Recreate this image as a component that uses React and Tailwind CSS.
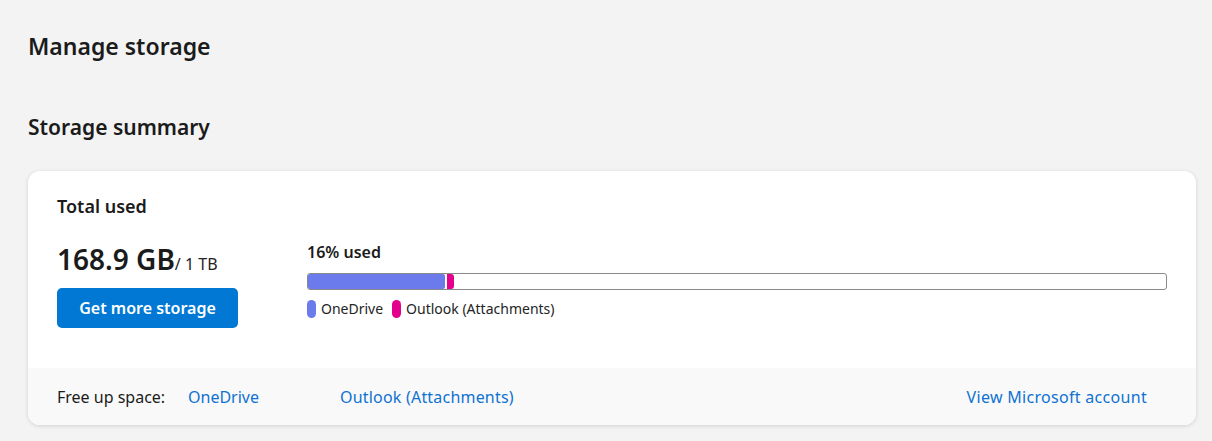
import React from 'react';

const font = { fontFamily: '"Segoe UI", "Noto Sans", "Open Sans", sans-serif' };

// Storage figures for the summary card
const usage = {
  used: '168.9 GB',
  total: '1 TB',
  percent: 16,
  segments: [
    { name: 'OneDrive', color: 'bg-[#6b7bec]', width: 16 },
    { name: 'Outlook (Attachments)', color: 'bg-[#e3008c]', width: 0.8 },
  ],
};

const UsageBar = ({ segments }) => (
  <div className="flex h-[17px] w-full overflow-hidden rounded-[3px] border border-[#8a8a8a] bg-white">
    {segments.map((s, i) => (
      <div
        key={s.name}
        className={`${s.color} h-full ${i === 0 ? 'rounded-r-[2px]' : 'ml-[2px] rounded-r-[3px]'}`}
        style={{ width: `${s.width}%` }}
      />
    ))}
  </div>
);

const Legend = ({ segments }) => (
  <div className="mt-[8px] flex items-center gap-[9px]">
    {segments.map((s) => (
      <div key={s.name} className="flex items-center gap-[5px]">
        <span className={`${s.color} h-[18px] w-[9px] rounded-full`} />
        <span className="text-[14px] text-[#242424]">{s.name}</span>
      </div>
    ))}
  </div>
);

export default function App() {
  return (
    <div className="min-h-[441px] bg-[#f3f3f3] pl-[28px] pr-[16px] pt-[29px] text-[#1b1b1b]" style={font}>
      <h1 className="text-[23px] font-[560] leading-[34px]">Manage storage</h1>
      <h2 className="mt-[49px] text-[21px] font-[560] leading-[30px]">Storage summary</h2>

      <div className="mt-[29px] overflow-hidden rounded-[12px] bg-white shadow-[0_1px_4px_rgba(0,0,0,0.14)]">
        <div className="px-[29px] pb-[40px] pt-[22px]">
          <div className="text-[18px] font-[560] leading-[26px]">Total used</div>
          <div className="mt-[22px] flex">
            <div className="w-[250px] shrink-0">
              <div className="flex items-baseline">
                <span className="text-[28px] font-[560] leading-[36px]">{usage.used}</span>
                <span className="text-[16px] text-[#242424]">/ {usage.total}</span>
              </div>
              <button className="mt-[11px] h-[40px] w-[181px] rounded-[5px] bg-[#0078d4] text-[16px] font-[560] text-white">
                Get more storage
              </button>
            </div>
            <div className="flex-1">
              <div className="text-[16px] font-[560] leading-[22px]">{usage.percent}% used</div>
              <div className="mt-[10px]">
                <UsageBar segments={usage.segments} />
              </div>
              <Legend segments={usage.segments} />
            </div>
          </div>
        </div>

        <div className="flex h-[57px] items-center bg-[#f9f9f9] pl-[29px] pr-[49px] text-[16px]">
          <span className="w-[131px] text-[#1b1b1b]">Free up space:</span>
          <a className="w-[152px] text-[#0f72d2]">OneDrive</a>
          <a className="tracking-[0.2px] text-[#0f72d2]">Outlook (Attachments)</a>
          <a className="ml-auto tracking-[0.3px] text-[#0f72d2]">View Microsoft account</a>
        </div>
      </div>
    </div>
  );
}
